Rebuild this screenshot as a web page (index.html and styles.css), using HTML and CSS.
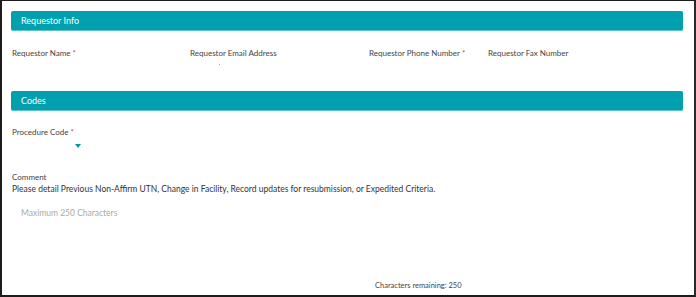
FILE: index.html
```html
<!DOCTYPE html>
<html lang="en">
<head>
	<meta charset="utf-8" />
	<title>Requestor Info</title>
	<link rel="stylesheet" href="styles.css">
</head>
<body>
	<div class="frame">

		<div class="section-head">Requestor Info</div>
		<div class="row fields">
			<div class="field">
				<label>Requestor Name <span class="req">*</span></label>
			</div>
			<div class="field">
				<label>Requestor Email Address</label>
				<span class="dot"></span>
			</div>
			<div class="field">
				<label>Requestor Phone Number <span class="req">*</span></label>
			</div>
			<div class="field">
				<label>Requestor Fax Number</label>
			</div>
		</div>

		<div class="section-head">Codes</div>
		<div class="field code">
			<label>Procedure Code <span class="req">*</span></label>
			<span class="caret"></span>
		</div>

		<div class="comment">
			<label>Comment</label>
			<p class="hint">Please detail Previous Non-Affirm UTN, Change in Facility, Record updates for resubmission, or Expedited Criteria.</p>
			<textarea placeholder="Maximum 250 Characters"></textarea>
			<div class="remaining">Characters remaining: 250</div>
		</div>

	</div>
</body>
</html>
```

FILE: styles.css
```css
body{margin:0;padding:0;font-family:Lato,"Open Sans",sans-serif;color:#444;background:#fff;}
.frame{width:696px;height:297px;box-sizing:border-box;border:2px solid #1c1c1c;border-top-width:1px;border-right-color:#2a2a2a;padding:10px 11px 0 9px;overflow:hidden;}
.section-head{height:20px;line-height:19px;background:#00a0ae;border-bottom:1px solid #5cc3cc;border-radius:2px;color:#fff;font-size:9px;padding-left:10px;box-sizing:border-box;}
.row{display:grid;grid-template-columns:178px 179px 119px auto;padding:17px 0 0 1px;height:60px;box-sizing:border-box;}
.field label{font-size:8px;line-height:10px;color:#444;display:block;}
.req{color:#e23b3b;}
.dot{display:block;width:1px;height:1px;background:#aaa;margin:6px 0 0 29px;}
.code{padding:16px 0 0 1px;height:61px;box-sizing:border-box;}
.caret{display:block;width:0;height:0;border-left:3px solid transparent;border-right:3px solid transparent;border-top:4px solid #0097a7;margin:7px 0 0 63px;}
.comment{padding:0 0 0 1px;}
.comment label{display:block;font-size:8px;line-height:10px;color:#444;}
.hint{margin:2px 0 0;font-size:8.5px;line-height:10px;color:#333;}
textarea{display:block;border:0;resize:none;width:600px;height:60px;margin:14px 0 0 9px;padding:0;font-family:inherit;font-size:8.5px;line-height:10px;color:#444;outline:none;}
textarea::placeholder{color:#aaa;}
.remaining{font-size:7.5px;line-height:10px;color:#444;padding-left:363px;margin-top:13px;}
```
